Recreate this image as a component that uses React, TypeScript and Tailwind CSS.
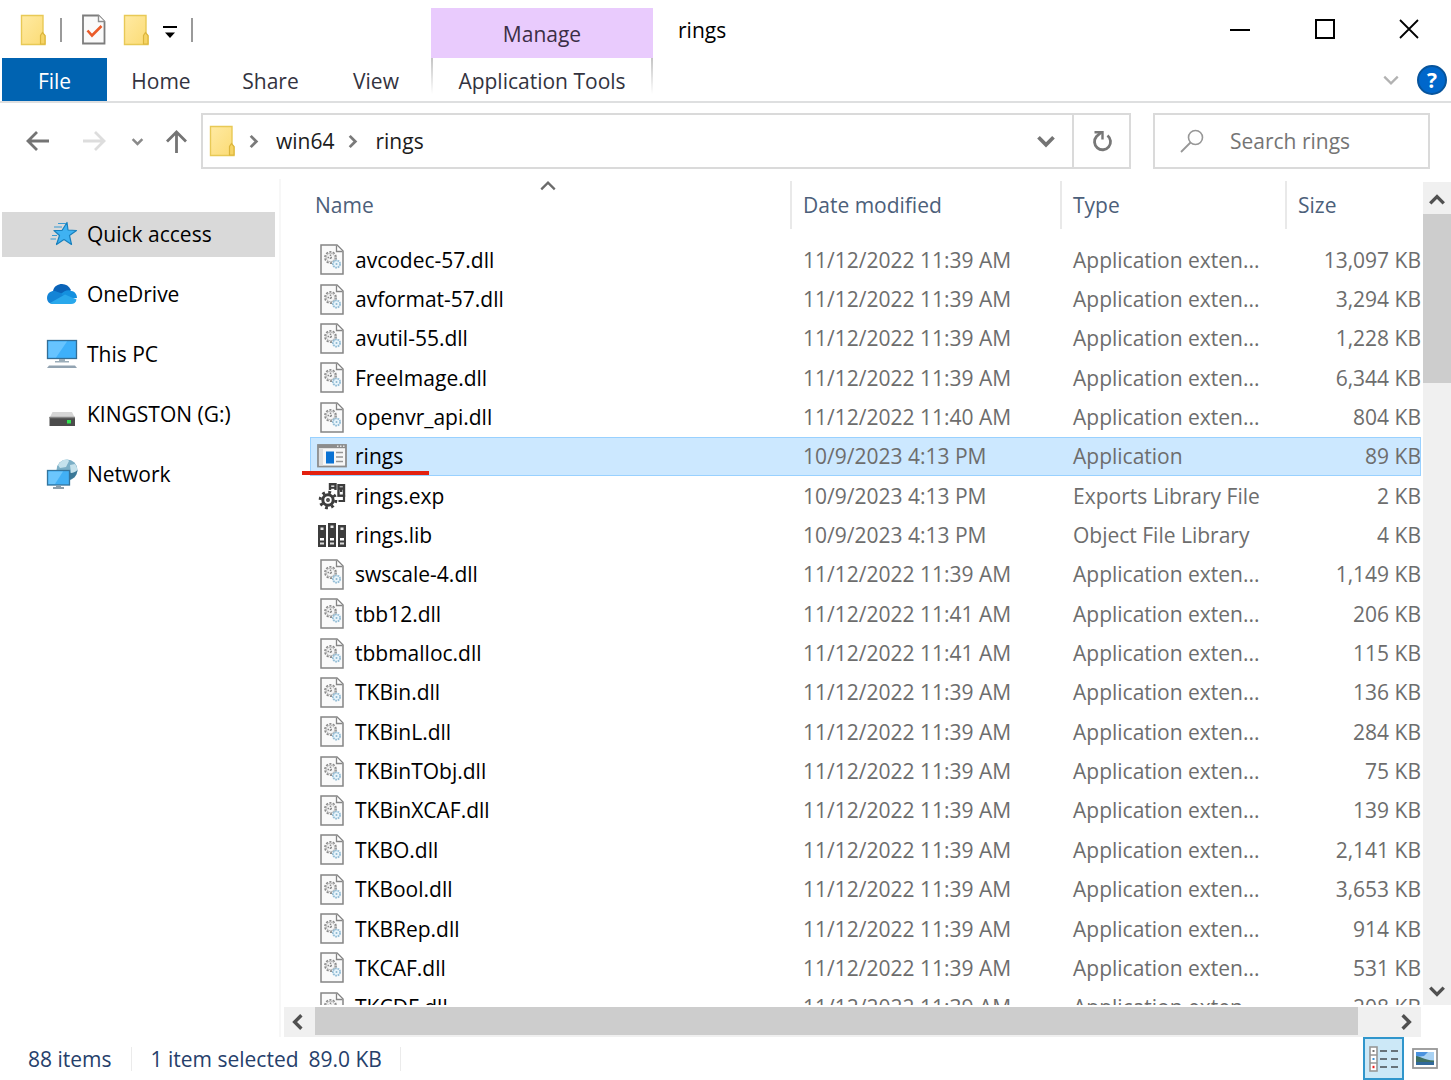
import React from "react";

type Kind = "dll" | "app" | "exp" | "lib";
type FileRow = { name: string; date: string; type: string; size: string; kind: Kind };

const dll = (name: string, time: string, size: string): FileRow => ({
  name,
  date: `11/12/2022 ${time} AM`,
  type: "Application exten...",
  size,
  kind: "dll",
});

const files: FileRow[] = [
  dll("avcodec-57.dll", "11:39", "13,097 KB"),
  dll("avformat-57.dll", "11:39", "3,294 KB"),
  dll("avutil-55.dll", "11:39", "1,228 KB"),
  dll("FreeImage.dll", "11:39", "6,344 KB"),
  dll("openvr_api.dll", "11:40", "804 KB"),
  { name: "rings", date: "10/9/2023 4:13 PM", type: "Application", size: "89 KB", kind: "app" },
  { name: "rings.exp", date: "10/9/2023 4:13 PM", type: "Exports Library File", size: "2 KB", kind: "exp" },
  { name: "rings.lib", date: "10/9/2023 4:13 PM", type: "Object File Library", size: "4 KB", kind: "lib" },
  dll("swscale-4.dll", "11:39", "1,149 KB"),
  dll("tbb12.dll", "11:41", "206 KB"),
  dll("tbbmalloc.dll", "11:41", "115 KB"),
  dll("TKBin.dll", "11:39", "136 KB"),
  dll("TKBinL.dll", "11:39", "284 KB"),
  dll("TKBinTObj.dll", "11:39", "75 KB"),
  dll("TKBinXCAF.dll", "11:39", "139 KB"),
  dll("TKBO.dll", "11:39", "2,141 KB"),
  dll("TKBool.dll", "11:39", "3,653 KB"),
  dll("TKBRep.dll", "11:39", "914 KB"),
  dll("TKCAF.dll", "11:39", "531 KB"),
  dll("TKCDF.dll", "11:39", "208 KB"),
];

function Folder() {
  return (
    <svg width="26" height="32" viewBox="0 0 26 32" className="shrink-0" aria-hidden="true">
      <defs>
        <linearGradient id="folder" x1="0" y1="0" x2="1" y2="1">
          <stop offset="0" stopColor="#ffeaa3" />
          <stop offset="1" stopColor="#fbdb74" />
        </linearGradient>
      </defs>
      <path d="M1.5 1.5H23V20L25 22V30.5H1.5Z" fill="url(#folder)" stroke="#e8c956" strokeWidth="1.4" />
      <path d="M20.5 30V21.5L22.5 18.5L25 21.5V30Z" fill="#f6d465" stroke="#dcb63c" strokeWidth="1.2" />
    </svg>
  );
}

function CheckPage() {
  return (
    <svg width="24" height="31" viewBox="0 0 24 31" aria-hidden="true">
      <path d="M1 1.5H16.5L22.5 7.5V29.5H1Z" fill="#fafafa" stroke="#7d7d7d" strokeWidth="1.8" />
      <path d="M16.5 1.5V7.5H22.5" fill="#fff" stroke="#8d8d8d" strokeWidth="1.4" />
      <path d="M5.5 16.5L10 21.5L19.5 12" fill="none" stroke="#ea5b29" strokeWidth="2.6" />
    </svg>
  );
}

function FileIcon({ kind }: { kind: Kind }) {
  if (kind === "app")
    return (
      <svg width="30" height="24" viewBox="0 0 30 24" aria-hidden="true">
        <rect x="1" y="1" width="28" height="21.5" fill="#f7f7f7" stroke="#8c8c8c" strokeWidth="1.8" />
        <path d="M1 2.5H29" stroke="#8c8c8c" strokeWidth="3.4" />
        <path d="M20 2.3h1.5M23 2.3h1.5M26 2.3h1.5" stroke="#e4e4e4" strokeWidth="1.4" />
        <path d="M2 5H6V21.5H2Z" fill="#dedede" />
        <rect x="9" y="7.5" width="8" height="12" fill="#0b72d3" />
        <path d="M19 8.5H26M19 13H26M19 17.5H26" stroke="#969696" strokeWidth="1.6" />
      </svg>
    );
  if (kind === "exp")
    return (
      <svg width="28" height="28" viewBox="0 0 28 28" aria-hidden="true">
        <g stroke="#3d3d3d" fill="none">
          <circle cx="10" cy="18" r="5.2" strokeWidth="3" />
          <circle cx="10" cy="18" r="7.8" strokeWidth="3" strokeDasharray="2.8 3.326" />
          <circle cx="10" cy="18" r="1.2" strokeWidth="1.5" />
          <path d="M12 8V2.2H17.5V8" strokeWidth="2.4" />
          <path d="M12 5.8H18" strokeWidth="2" />
          <rect x="20.5" y="3.2" width="5.5" height="10.5" strokeWidth="2.4" />
          <path d="M20.5 6.5H26M23.2 7V10" strokeWidth="2.4" />
          <path d="M20.5 19H26V13" strokeWidth="2.2" />
        </g>
      </svg>
    );
  if (kind === "lib")
    return (
      <svg width="28" height="24" viewBox="0 0 28 24" aria-hidden="true">
        {[
          { x: 0, y: 2 },
          { x: 10, y: 0 },
          { x: 20, y: 2 },
        ].map(({ x, y }) => (
          <g key={x}>
            <rect x={x} y={y} width="8" height={24 - y} fill="#3d3d3d" />
            <rect x={x + 2.5} y={y + 2.5} width="3" height="2.5" fill="#e8e8e8" />
            <rect x={x + 2} y="15" width="4" height="2.5" fill="#fff" />
            <rect x={x + 2} y="19.5" width="4" height="2" fill="#dcdcdc" />
          </g>
        ))}
      </svg>
    );
  return (
    <svg width="24" height="31" viewBox="0 0 24 31" aria-hidden="true">
      <path d="M1 1H17L23 7V30H1Z" fill="#fafafa" stroke="#858585" strokeWidth="1.5" />
      <path d="M16.5 1.5V7.5H22.5" fill="#fff" stroke="#858585" strokeWidth="1.3" />
      <circle cx="10.5" cy="13.5" r="5.6" fill="none" stroke="#8a8a8a" strokeWidth="1.6" strokeDasharray="2.2 1.3" />
      <circle cx="10.5" cy="13.5" r="4.3" fill="#f4f4f4" stroke="#a6a6a6" strokeWidth="0.8" />
      <path d="M10.5 10.5V16.500M7.5 13.5H13.5" stroke="#8a8a8a" strokeWidth="1.5" strokeDasharray="1.5 1.5" />
      <circle cx="16.5" cy="20" r="3.6" fill="#eaf5fb" stroke="#93bdd6" strokeWidth="1.8" strokeDasharray="1.8 0.7" />
      <circle cx="16.5" cy="20" r="1" fill="#8fb9d2" />
    </svg>
  );
}

function Chevron({ dir, size = 16, width = 3, className = "text-[#505050]" }: { dir: "up" | "down" | "left" | "right"; size?: number; width?: number; className?: string }) {
  const d = { up: "M2 11L8 5L14 11", down: "M2 5L8 11L14 5", left: "M11 2L5 8L11 14", right: "M5 2L11 8L5 14" }[dir];
  return (
    <svg width={size} height={size} viewBox="0 0 16 16" className={className} aria-hidden="true">
      <path d={d} fill="none" stroke="currentColor" strokeWidth={width} />
    </svg>
  );
}

function Arrow({ dir, className }: { dir: "left" | "right" | "up"; className: string }) {
  const d = { left: "M24 12H3M12 3L3 12L12 21", right: "M1 12H22M13 3L22 12L13 21", up: "M12.500 24V3M3 12.500L12.500 3L22 12.500" }[dir];
  return (
    <svg width="25" height="24" viewBox="0 0 25 24" className={className} aria-hidden="true">
      <path d={d} fill="none" stroke="currentColor" strokeWidth="2.8" />
    </svg>
  );
}

const places: { label: string; icon: React.ReactNode }[] = [
  {
    label: "Quick access",
    icon: (
      <svg width="32" height="28" viewBox="0 0 32 28" aria-hidden="true">
        <path d="M21 2.5L22 10L30.500 10.500L23.500 15.500L25.500 24.500L18 19.500L10.500 24.500L13.500 15.500L8 10.500H16Z" fill="#3fb2f2" stroke="#1880bd" strokeWidth="1.2" strokeLinejoin="round" />
        <path d="M12 3.500H20M8 7H16M6 15.500H11M4.500 19H10" stroke="#3a9bd2" strokeWidth="1.2" />
      </svg>
    ),
  },
  {
    label: "OneDrive",
    icon: (
      <svg width="32" height="28" viewBox="0 0 32 28" aria-hidden="true">
        <path d="M7 11C8 6 12 4 16 4C20 4 23 6 25 10L17 18Z" fill="#0a63b8" />
        <path d="M7 24C3 24 1 21 1 18C1 13 5 10.5 9 11L20 15L12 24Z" fill="#1484d6" />
        <path d="M15 14C18 11 22 9 25.5 11C29 11.5 31 14.5 31 18L21 19Z" fill="#1490df" />
        <path d="M4 23L19 14.5L30.5 19.5C30 22.5 28 24 25 24H7C6 24 5 23.5 4 23Z" fill="#29a8ec" />
      </svg>
    ),
  },
  {
    label: "This PC",
    icon: (
      <svg width="32" height="30" viewBox="0 0 32 30" aria-hidden="true">
        <rect x="1.5" y="1.5" width="29" height="18" fill="#3eb0fa" stroke="#346d94" strokeWidth="1.3" />
        <path d="M2.5 2.5H21L10 18.5H2.5Z" fill="#67c4ff" />
        <path d="M13 20H19V22H13ZM9 22H23V23.5H9Z" fill="#9badb9" />
        <path d="M3 26.500H29L31 29H1Z" fill="#92a3b1" />
      </svg>
    ),
  },
  {
    label: "KINGSTON (G:)",
    icon: (
      <svg width="32" height="28" viewBox="0 0 32 28" aria-hidden="true">
        <path d="M6.5 12H26L29 18H3.5Z" fill="#d6d6d6" />
        <rect x="3.500" y="17" width="25.5" height="9" fill="#4c4c4c" />
        <path d="M3.5 17.5H29" stroke="#858585" strokeWidth="1.5" />
        <rect x="21" y="20" width="4" height="3.5" fill="#32e150" />
      </svg>
    ),
  },
  {
    label: "Network",
    icon: (
      <svg width="32" height="32" viewBox="0 0 32 32" aria-hidden="true">
        <circle cx="21" cy="12" r="10.5" fill="#7bafc6" />
        <path d="M12 7C15 2 21 0 23 3L20 9L14 10ZM24 7L29 6C32 10 32 14 29 18L25 15Z" fill="#c5e2ec" />
        <path d="M22 22C29 21 31 16 31.5 12C27 16 24 15 22 14Z" fill="#3a7897" />
        <rect x="1.5" y="12.500" width="22" height="14.5" fill="#42b0f5" stroke="#34749c" strokeWidth="1.3" />
        <path d="M2.5 13.5H17L9 26H2.5Z" fill="#6cc6fc" />
        <path d="M10 27.5H15V29H10ZM7 29H18V31H7Z" fill="#8c9eaa" />
      </svg>
    ),
  },
];

function TitleBar() {
  return (
    <header className="flex h-[58px] shrink-0 text-black">
      <div className="flex w-[431px] shrink-0 items-center pt-px pl-5">
        <Folder />
        <span className="ml-3.5 h-6 w-0.5 bg-[#9a9a9a]" />
        <button type="button" aria-label="Properties" className="ml-5">
          <CheckPage />
        </button>
        <button type="button" aria-label="New folder" className="ml-[17px]">
          <Folder />
        </button>
        <button type="button" aria-label="Customize Quick Access Toolbar" className="mt-1 ml-3.5">
          <svg width="14" height="14" viewBox="0 0 14 14" aria-hidden="true">
            <path d="M2 7.5H12L7 13Z" fill="black" />
            <rect y="1" width="14" height="2" />
          </svg>
        </button>
        <span className="ml-3.5 h-6 w-0.5 bg-[#9a9a9a]" />
      </div>
      <div className="mt-2 flex w-[222px] shrink-0 items-center justify-center bg-[#e9cbfd] pt-0.5 text-[#3c2e46]">Manage</div>
      <h1 className="ml-[25px] mt-4 leading-7">rings</h1>
      <div className="ml-auto flex items-center">
        <button type="button" aria-label="Minimize" className="flex w-[85px] justify-center">
          <svg width="20" height="20" viewBox="0 0 20 20" aria-hidden="true">
            <path d="M0 11H20" stroke="black" strokeWidth="2" />
          </svg>
        </button>
        <button type="button" aria-label="Maximize" className="flex w-[85px] justify-center">
          <svg width="20" height="20" viewBox="0 0 20 20" aria-hidden="true">
            <rect x="1" y="1" width="18" height="18" fill="none" stroke="black" strokeWidth="2" />
          </svg>
        </button>
        <button type="button" aria-label="Close" className="flex w-[84px] justify-center">
          <svg width="20" height="20" viewBox="0 0 20 20" aria-hidden="true">
            <path d="M1 1L19 19M19 1L1 19" stroke="black" strokeWidth="1.8" />
          </svg>
        </button>
      </div>
    </header>
  );
}

function Ribbon() {
  return (
    <nav className="flex h-[45px] shrink-0 items-stretch border-b-2 border-[#dedfe0] pl-0.5 text-[#333340]">
      <button type="button" className="w-[105px] bg-[#0063b1] pt-0.5 text-white">File</button>
      <button type="button" className="w-[108px] pt-0.5">Home</button>
      <button type="button" className="w-[111px] pt-0.5">Share</button>
      <button type="button" className="mr-[5px] w-[100px] pt-0.5">View</button>
      <div className="flex w-[222px] justify-between">
        <span className="h-9 w-0.5 bg-linear-to-b from-[#c4c4c4] to-white" />
        <button type="button" className="pt-0.5">Application Tools</button>
        <span className="h-9 w-0.5 bg-linear-to-b from-[#c4c4c4] to-white" />
      </div>
      <div className="ml-auto flex items-center gap-[17px] pr-1">
        <button type="button" aria-label="Expand the Ribbon">
          <Chevron dir="down" size={18} width={2} className="text-[#b2b2b2]" />
        </button>
        <button type="button" aria-label="Help" className="flex size-[30px] items-center justify-center rounded-full border-2 border-[#07549c] bg-[#0067cb] font-bold text-white">
          ?
        </button>
      </div>
    </nav>
  );
}

function AddressRow() {
  return (
    <div className="flex h-[76px] shrink-0 items-center pr-[21px] pl-[25px]">
      <button type="button" aria-label="Back"><Arrow dir="left" className="text-[#747474]" /></button>
      <button type="button" aria-label="Forward" className="ml-8"><Arrow dir="right" className="text-[#dddddd]" /></button>
      <button type="button" aria-label="Recent locations" className="ml-6"><Chevron dir="down" size={13} className="text-[#8a8a8a]" /></button>
      <button type="button" aria-label="Up" className="ml-5"><Arrow dir="up" className="text-[#747474]" /></button>
      <div className="ml-3 flex h-14 min-w-0 flex-1 border-2 border-[#dadada] text-[#1c1c1c]">
        <div className="flex min-w-0 flex-1 items-center pl-1.5">
          <Folder />
          <Chevron dir="right" size={15} className="ml-[11px] text-[#7a7a7a]" />
          <button type="button" className="ml-[15px]">win64</button>
          <Chevron dir="right" size={15} className="ml-[11px] text-[#7a7a7a]" />
          <button type="button" className="ml-[15px]">rings</button>
          <button type="button" aria-label="Previous locations" className="mr-4 ml-auto"><Chevron dir="down" size={20} width={3} className="text-[#747474]" /></button>
        </div>
        <button type="button" aria-label="Refresh" className="flex w-[57px] items-center justify-center border-l-2 border-[#dadada]">
          <svg width="22" height="22" viewBox="0 0 22 22" aria-hidden="true">
            <path d="M16.5 5.500A8 8 0 1 1 5.500 6.500L10 2.500" fill="none" stroke="#777" strokeWidth="2.8" />
            <path d="M3.500 2.300H11.500V9.500" fill="none" stroke="#777" strokeWidth="2.4" />
          </svg>
        </button>
      </div>
      <label className="ml-[22px] flex h-14 w-[277px] items-center border-2 border-[#dadada] pl-[25px]">
        <svg width="24" height="24" viewBox="0 0 24 24" aria-hidden="true" className="shrink-0">
          <circle cx="15.5" cy="8.5" r="7" fill="none" stroke="#979797" strokeWidth="1.6" />
          <path d="M10.5 13.5L1 23" stroke="#979797" strokeWidth="1.8" />
        </svg>
        <input type="text" aria-label="Search rings" placeholder="Search rings" className="ml-[26px] w-full min-w-0 bg-transparent outline-none placeholder:text-[#757575]" />
      </label>
    </div>
  );
}

function Sidebar() {
  return (
    <aside className="w-[281px] shrink-0 border-r-2 border-[#f7f7f7] pt-[33px] pr-1 pl-0.5">
      <ul className="flex flex-col gap-[15px]">
        {places.map((p, i) => (
          <li key={p.label}>
            <a href="#" className={`flex h-[45px] items-center gap-[9px] pb-0.5 pl-11 text-black ${i === 0 ? "bg-[#d9d9d9]" : ""}`}>
              {p.icon}
              {p.label}
            </a>
          </li>
        ))}
      </ul>
    </aside>
  );
}

function FileTable() {
  return (
    <table className="mt-0.5 h-[846px] w-full table-fixed border-collapse text-left">
      <colgroup>
        <col />
        <col className="w-[270px]" />
        <col className="w-[225px]" />
        <col className="w-[136px]" />
      </colgroup>
      <thead>
        <tr className="h-[59px] align-top text-[#4c607a]">
          <th className="relative p-0 font-normal">
            <button type="button" className="h-12 w-full pl-[5px] text-left">Name</button>
            <span className="pointer-events-none absolute inset-x-0 -top-1 flex justify-center pr-1">
              <Chevron dir="up" size={18} width={2} className="text-[#6b6b6b]" />
            </span>
          </th>
          {["Date modified", "Type", "Size"].map((h) => (
            <th key={h} className="p-0 font-normal">
              <button type="button" className="h-12 w-full border-l-2 border-[#e9e9e9] pl-[11px] text-left">{h}</button>
            </th>
          ))}
        </tr>
      </thead>
      <tbody>
        {files.map((f) => {
          const selected = f.kind === "app";
          return (
            <tr key={f.name} aria-selected={selected} className={`text-[#6d6d6d] ${selected ? "bg-[#cce8ff] outline-1 -outline-offset-1 outline-[#99d1ff]" : ""}`}>
              <td className="relative p-0 text-black">
                <div className="flex h-8 items-center">
                  <span className="flex w-[45px] shrink-0 justify-center pr-px">
                    <FileIcon kind={f.kind} />
                  </span>
                  {f.name}
                </div>
                {selected && <span className="absolute bottom-px -left-2 h-1 w-[127px] bg-[#e3210f]" />}
              </td>
              <td className="p-0 pl-[13px] whitespace-nowrap">{f.date}</td>
              <td className="p-0 pl-[13px] whitespace-nowrap">{f.type}</td>
              <td className="p-0 text-right whitespace-nowrap">{f.size}</td>
            </tr>
          );
        })}
      </tbody>
    </table>
  );
}

function StatusBar() {
  return (
    <footer className="flex h-[43px] shrink-0 items-center pl-7 text-[#26406b]">
      <span>88 items</span>
      <span className="ml-[19px] h-6 w-px bg-[#ebebeb]" />
      <span className="ml-[19px]">1 item selected</span>
      <span className="ml-2.5">89.0 KB</span>
      <span className="ml-[18px] h-6 w-px bg-[#ebebeb]" />
      <div className="ml-auto flex h-full items-center pr-[13px]">
        <button type="button" aria-label="Details view" className="flex h-[43px] w-[41px] items-center justify-center border-2 border-[#3096cc] bg-[#cce8f7]">
          <svg width="30" height="26" viewBox="0 0 30 26" aria-hidden="true">
            <rect x="1" y="1" width="7" height="24" fill="#fff" stroke="#979797" strokeWidth="1.6" />
            <path d="M1 9H8M1 17H8" stroke="#979797" strokeWidth="1.6" />
            <path d="M3.5 5H5.5" stroke="#777" strokeWidth="2" />
            <path d="M3.5 13H5.5" stroke="#3b93d6" strokeWidth="2" />
            <path d="M3.5 21H5.5" stroke="#e22" strokeWidth="2.4" />
            <path d="M11 5H18M22 5H29M11 13H18M22 13H29M11 21H18M22 21H29" stroke="#68737a" strokeWidth="2" />
          </svg>
        </button>
        <button type="button" aria-label="Thumbnail view" className="ml-2">
          <svg width="26" height="21" viewBox="0 0 26 21" aria-hidden="true">
            <rect x="1" y="1" width="24" height="19" fill="#fff" stroke="#979797" strokeWidth="1.8" />
            <rect x="4" y="4" width="18" height="13" fill="#a9d2f3" />
            <path d="M4 4H16L12 8L4 9Z" fill="#4a92df" />
            <path d="M4 8C8 8 11 12 22 12.5V14H4Z" fill="#3f6f60" />
            <path d="M4 14H22V17H4Z" fill="#31699b" />
          </svg>
        </button>
      </div>
    </footer>
  );
}

export default function App() {
  return (
    <div className="flex h-screen flex-col overflow-hidden bg-white font-['Open_Sans','Noto_Sans',sans-serif] text-[21px] leading-7">
      <TitleBar />
      <Ribbon />
      <AddressRow />
      <div className="flex min-h-0 flex-1">
        <Sidebar />
        <main className="flex min-w-0 flex-1 flex-col pl-[3px]">
          <div className="flex min-h-0 flex-1 gap-0.5">
            <div className="min-w-0 flex-1 overflow-hidden pl-[26px]">
              <FileTable />
            </div>
            <div className="mt-[3px] flex w-7 shrink-0 flex-col bg-[#f0f0f0]">
              <button type="button" aria-label="Scroll up" className="flex h-8 items-center justify-center pt-1"><Chevron dir="up" size={18} /></button>
              <div className="h-[169px] bg-[#cdcdcd]" />
              <button type="button" aria-label="Scroll down" className="mt-auto flex h-8 items-center justify-center pt-1"><Chevron dir="down" size={18} /></button>
            </div>
          </div>
          <div className="mt-0.5 mr-[30px] flex h-[30px] shrink-0 bg-[#f0f0f0]">
            <button type="button" aria-label="Scroll left" className="flex w-[31px] shrink-0 items-center justify-center pr-1"><Chevron dir="left" size={18} /></button>
            <div className="mb-0.5 flex-1 bg-[#cdcdcd]" />
            <button type="button" aria-label="Scroll right" className="ml-8 flex w-[31px] shrink-0 items-center justify-center"><Chevron dir="right" size={18} /></button>
          </div>
        </main>
      </div>
      <StatusBar />
    </div>
  );
}
